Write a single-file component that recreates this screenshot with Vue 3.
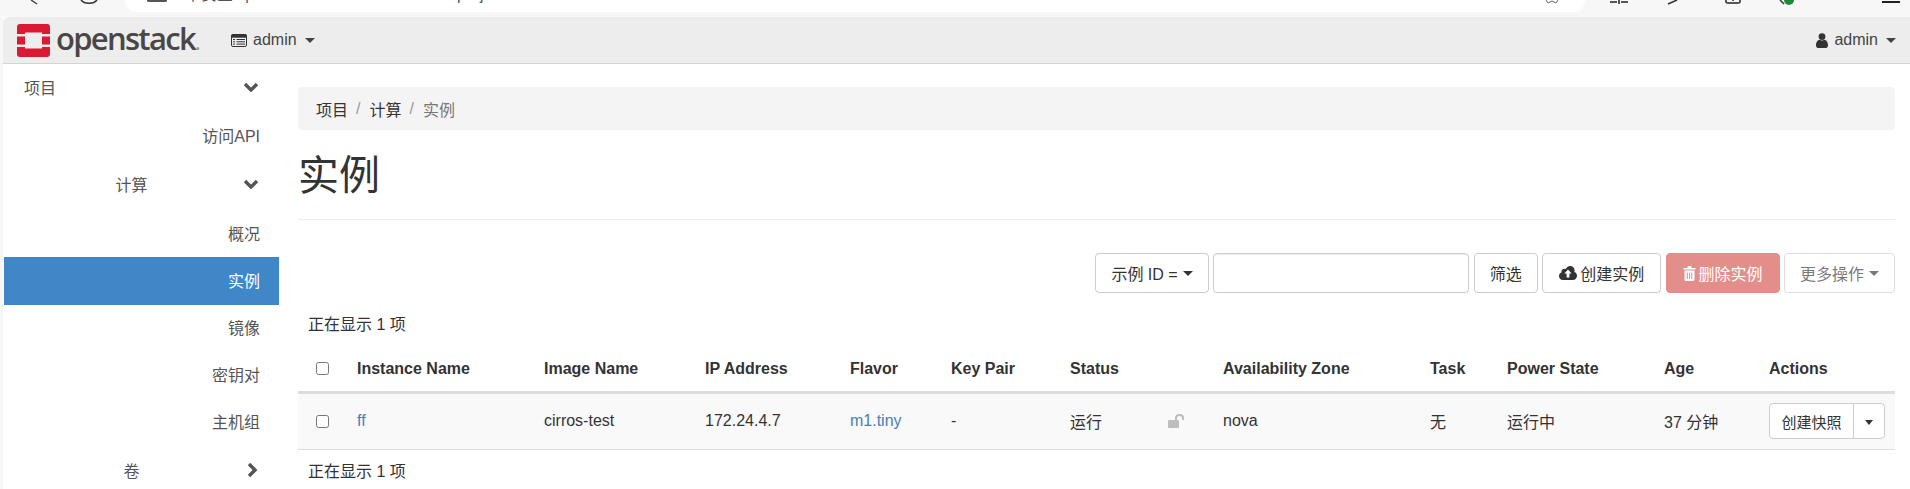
<template>
  <div class="page">
    <div class="browser">
      <svg class="browser-icons" width="1910" height="17" viewBox="0 0 1910 17">
        <path d="M31 0 L37 4" fill="none" stroke="#444" stroke-width="1.5" />
        <path d="M81 0 A9 6 0 0 0 97 0" fill="none" stroke="#333" stroke-width="1.5" />
        <path d="M147 0 V1 Q147 2 149 2 H165 Q167 2 167 1 V0 Z" fill="#555" />
        <path d="M1546 0 L1548 3 L1552 1 L1556 3 L1558 0" fill="none" stroke="#666" />
        <path d="M1610 2 H1617 M1621 2 H1628 M1619 0 V4" fill="none" stroke="#222" stroke-width="1.5" />
        <path d="M1677 0 L1668 4" fill="none" stroke="#333" stroke-width="1.5" />
        <path d="M1726 0 V2 Q1726 3 1728 3 H1738 Q1740 3 1740 2 V0 M1733 0 V1" fill="none" stroke="#222" stroke-width="1.5" />
        <path d="M1780 0 L1784 4" fill="none" stroke="#333" stroke-width="1.5" />
        <circle cx="1789" cy="0" r="5" fill="#1e8a35" />
        <path d="M1882 2 H1900" stroke="#222" stroke-width="2" />
      </svg>
      <div class="addressbar">
        <span class="addr-text">不安全</span>
        <span class="addr-sep">|</span>
        <span class="addr-text">192.168.10.100/dashboard/project/instances/</span>
      </div>
    </div>

    <div class="window">
      <header class="navbar">
        <div class="brand">
          <svg width="33" height="33" viewBox="0 0 33 33">
            <path d="M3 0 H30 Q33 0 33 3 V10 H25 V8.5 H8 V10 H0 V3 Q0 0 3 0 Z" fill="#da1a32" />
            <rect x="0" y="12.5" width="8" height="8" fill="#da1a32" />
            <rect x="25" y="12.5" width="8" height="8" fill="#da1a32" />
            <path d="M0 23 H8 V24.5 H25 V23 H33 V30 Q33 33 30 33 H3 Q0 33 0 30 Z" fill="#da1a32" />
          </svg>
          <span class="brand-name">openstack<span class="brand-dot">.</span></span>
        </div>
        <div class="nav-menu project-menu">
          <svg width="16" height="13" viewBox="0 0 16 13">
            <rect x="0.5" y="0.5" width="15" height="12" rx="1.5" fill="#eee" stroke="#333" />
            <rect x="0.5" y="0.5" width="15" height="3.2" fill="#333" />
            <path d="M2 5.5 H4 M5.5 5.5 H14 M2 7.8 H4 M5.5 7.8 H14 M2 10.1 H4 M5.5 10.1 H14" stroke="#333" stroke-width="1" />
          </svg>
          <span>admin</span>
          <i class="caret"></i>
        </div>
        <div class="nav-menu user-menu">
          <svg width="12" height="15" viewBox="0 0 12 15">
            <circle cx="6" cy="3.6" r="3.4" fill="#333" />
            <path d="M0 12.5 C0 8.5 2 7 3.6 6.8 C5 7.8 7 7.8 8.4 6.8 C10 7 12 8.5 12 12.5 C12 14 11 15 10 15 H2 C1 15 0 14 0 12.5 Z" fill="#333" />
          </svg>
          <span>admin</span>
          <i class="caret"></i>
        </div>
      </header>

      <div class="layout">
        <aside class="sidebar">
          <div class="nav-row top-row">
            <span>项目</span>
            <svg class="chev" width="16" height="10" viewBox="0 0 16 10"><path d="M2 2 L8 8 L14 2" /></svg>
          </div>
          <div class="nav-row leaf access">访问API</div>
          <div class="nav-row group">
            <span class="group-label">计算</span>
            <svg class="chev" width="16" height="10" viewBox="0 0 16 10"><path d="M2 2 L8 8 L14 2" /></svg>
          </div>
          <div v-for="item in computeItems" :key="item.name" class="nav-row leaf" :class="{ active: item.active }">
            {{ item.name }}
          </div>
          <div class="nav-row group">
            <span class="group-label">卷</span>
            <svg class="chev" width="16" height="16" viewBox="0 0 16 16"><path d="M6 2 L12 8 L6 14" /></svg>
          </div>
        </aside>

        <main class="content">
          <div class="breadcrumb">
            <span>项目</span><em>/</em>
            <span>计算</span><em>/</em>
            <span class="current">实例</span>
          </div>
          <h1 class="title">实例</h1>

          <div class="toolbar">
            <button class="btn filter-field">示例 ID = <i class="caret"></i></button>
            <input class="search" type="text" />
            <button class="btn filter-go">筛选</button>
            <button class="btn create">
              <svg width="18" height="14" viewBox="0 0 18 14">
                <path d="M4 14 C1.5 14 0 12.2 0 10 C0 8.3 1 7 2.4 6.5 C2.4 6.3 2.4 6.1 2.4 5.9 C2.4 4 3.9 2.8 5.5 2.8 C6 2.8 6.5 2.9 6.9 3.1 C7.7 1.3 9.3 0 11.2 0 C13.7 0 15.6 2 15.6 4.6 C15.6 5.2 15.5 5.7 15.4 6.1 C16.9 6.6 18 8 18 9.8 C18 12.2 16.2 14 14 14 Z" fill="#333" />
                <path d="M9 3.6 L12.6 7.4 H10.4 V11.4 H7.6 V7.4 H5.4 Z" fill="#fff" />
              </svg>
              创建实例
            </button>
            <button class="btn danger">
              <svg width="13" height="15" viewBox="0 0 13 15">
                <path d="M4.5 2 V1 Q4.5 0 5.5 0 H7.5 Q8.5 0 8.5 1 V2 H12.5 V3.6 H0.5 V2 Z M1.5 4.5 H11.5 V13.5 Q11.5 15 10 15 H3 Q1.5 15 1.5 13.5 Z" fill="#fff" />
                <path d="M4.3 6.5 V13 M6.5 6.5 V13 M8.7 6.5 V13" stroke="#e48e8b" />
              </svg>
              删除实例
            </button>
            <button class="btn disabled">更多操作 <i class="caret"></i></button>
          </div>

          <div class="count">正在显示 1 项</div>

          <table class="instances">
            <colgroup>
              <col v-for="w in colWidths" :key="w.key" :style="{ width: w.px + 'px' }" />
            </colgroup>
            <thead>
              <tr>
                <th class="check"><input type="checkbox" /></th>
                <th v-for="h in headers" :key="h">{{ h }}</th>
              </tr>
            </thead>
            <tbody>
              <tr>
                <td class="check"><input type="checkbox" /></td>
                <td><a>ff</a></td>
                <td>cirros-test</td>
                <td>172.24.4.7</td>
                <td><a>m1.tiny</a></td>
                <td>-</td>
                <td>
                  <div class="status">
                    <span>运行</span>
                    <svg width="17" height="14" viewBox="0 0 17 14">
                      <rect x="0" y="6" width="11" height="8" rx="1" fill="#bdbdbd" />
                      <path d="M8 6 V4 C8 2 9.6 1 11.5 1 C13.4 1 15 2 15 4 V6" fill="none" stroke="#bdbdbd" stroke-width="2" />
                    </svg>
                  </div>
                </td>
                <td>nova</td>
                <td>无</td>
                <td>运行中</td>
                <td>37 分钟</td>
                <td>
                  <div class="split">
                    <button class="split-main">创建快照</button>
                    <button class="split-caret"><i class="caret small"></i></button>
                  </div>
                </td>
              </tr>
            </tbody>
          </table>

          <div class="count bottom">正在显示 1 项</div>
        </main>
      </div>
    </div>
  </div>
</template>

<script setup>
const computeItems = [
  { name: '概况' },
  { name: '实例', active: true },
  { name: '镜像' },
  { name: '密钥对' },
  { name: '主机组' }
]

const headers = [
  'Instance Name',
  'Image Name',
  'IP Address',
  'Flavor',
  'Key Pair',
  'Status',
  'Availability Zone',
  'Task',
  'Power State',
  'Age',
  'Actions'
]

const colWidths = [49, 187, 161, 145, 101, 119, 153, 207, 77, 157, 105, 136].map((px, key) => ({ px, key }))
</script>

<style>
html,
body {
  margin: 0;
  background: #fff;
}
</style>

<style scoped>
.page {
  width: 1910px;
  height: 489px;
  overflow: hidden;
  position: relative;
  background: #f7f7f7;
  font-family: "Liberation Sans", "Noto Sans CJK SC", sans-serif;
  font-size: 16px;
  color: #333;
}

.browser {
  height: 17px;
  position: relative;
  overflow: hidden;
}

.browser-icons {
  position: absolute;
  left: 0;
  top: 0;
}

.addressbar {
  margin-left: 125px;
  width: 1460px;
  height: 12px;
  background: #fff;
  border-radius: 0 0 14px 14px;
  box-sizing: border-box;
  padding-left: 60px;
  display: flex;
  gap: 12px;
  overflow: hidden;
  color: #555;
  line-height: 16px;
}

.addr-text,
.addr-sep {
  margin-top: -13px;
  white-space: nowrap;
}

.window {
  margin-left: 3px;
  background: #fff;
  height: 472px;
}

.navbar {
  height: 46px;
  background: #ededed;
  border-bottom: 1px solid #d4d4d4;
  border-top-left-radius: 6px;
  display: flex;
  align-items: center;
  padding-left: 14px;
  padding-right: 14px;
}

.brand {
  display: flex;
  align-items: center;
  gap: 6px;
  width: 214px;
}

.brand-name {
  font-family: "Open Sans", sans-serif;
  font-size: 31px;
  font-weight: 600;
  letter-spacing: -1.7px;
  color: #4a4646;
  line-height: 36px;
}

.brand-dot {
  color: #999;
  font-size: 20px;
}

.nav-menu {
  display: flex;
  align-items: center;
  gap: 6px;
  color: #444;
}

.user-menu {
  margin-left: auto;
}

.caret {
  display: inline-block;
  width: 0;
  height: 0;
  margin-left: 2px;
  border-top: 5px solid currentColor;
  border-left: 5px solid transparent;
  border-right: 5px solid transparent;
  vertical-align: middle;
}

.caret.small {
  margin-left: 0;
  border-top-width: 5px;
  border-left-width: 4px;
  border-right-width: 4px;
}

.layout {
  display: flex;
}

.sidebar {
  width: 275px;
  flex-shrink: 0;
  margin-left: 1px;
  color: #555;
}

.nav-row {
  height: 47px;
  display: flex;
  align-items: center;
  box-sizing: border-box;
  padding-right: 19px;
  padding-bottom: 2px;
}

.top-row {
  height: 48px;
  padding-left: 20px;
  justify-content: space-between;
}

.access {
  height: 48px;
}

.leaf {
  justify-content: flex-end;
}

.group {
  height: 50px;
  padding-left: 16px;
}

.active + .leaf {
  height: 46px;
}

.active ~ .group {
  height: 51px;
}

.group-label {
  flex: 1;
  text-align: center;
}

.chev {
  fill: none;
  stroke: #555;
  stroke-width: 3.4;
  margin-right: 1px;
}

.active {
  height: 48px;
  background: #3f87c7;
  color: #fff;
}

.content {
  flex: 1;
  min-width: 0;
  padding: 23px 15px 0 19px;
}

.breadcrumb {
  height: 43px;
  background: #f4f4f4;
  border-radius: 4px;
  display: flex;
  align-items: center;
  padding-left: 18px;
  box-sizing: border-box;
}

.breadcrumb em {
  font-style: normal;
  color: #999;
  margin: 0 9px 0 8px;
}

.breadcrumb .current {
  color: #777;
}

.title {
  margin: 0;
  height: 90px;
  line-height: 92px;
  font-size: 41px;
  font-weight: 400;
  border-bottom: 1px solid #eee;
  box-sizing: border-box;
  color: #333;
}

.toolbar {
  margin-top: 33px;
  display: flex;
  justify-content: flex-end;
  gap: 4.4px;
}

.btn {
  height: 40px;
  padding: 0;
  font: inherit;
  color: #333;
  background: #fff;
  border: 1px solid #ccc;
  border-radius: 4px;
  display: inline-flex;
  align-items: center;
  justify-content: center;
  gap: 3px;
  box-sizing: border-box;
  white-space: nowrap;
  width: 111px;
}

.filter-field {
  width: 114px;
}

.filter-go {
  width: 64px;
}

.create {
  width: 119px;
}

.search {
  width: 256px;
  height: 40px;
  box-sizing: border-box;
  border: 1px solid #ccc;
  border-radius: 4px;
  box-shadow: inset 0 1px 1px rgba(0, 0, 0, 0.075);
}

.danger {
  width: 114px;
  background: #e48e8b;
  border-color: #e48e8b;
  color: #fff;
}

.disabled {
  opacity: 0.65;
}

.count {
  margin-top: 22px;
  padding-left: 10px;
  line-height: 20px;
  height: 20px;
}

.bottom {
  margin-top: 12px;
}

.instances {
  width: 100%;
  margin-top: 11px;
  table-layout: fixed;
  border-collapse: collapse;
}

.instances th,
.instances td {
  padding: 0 10px;
  text-align: left;
}

.instances th {
  height: 46px;
  padding-top: 2px;
  box-sizing: border-box;
  font-weight: 700;
  border-bottom: 3px solid #ddd;
}

.instances td {
  height: 55px;
  background: #f9f9f9;
  border-bottom: 1px solid #ddd;
}

.instances .check {
  padding: 0 0 0 18px;
}

.check input {
  display: block;
  margin: 0;
  width: 13px;
  height: 13px;
}

.instances a {
  color: #4a7fb5;
}

.status {
  display: flex;
  align-items: center;
  justify-content: space-between;
  padding-right: 18px;
}

.split {
  display: flex;
  width: 116px;
  height: 36px;
  background: #fff;
  border: 1px solid #ccc;
  border-radius: 4px;
  box-sizing: border-box;
}

.split button {
  font: inherit;
  font-size: 15px;
  color: #333;
  background: none;
  border: 0;
  padding: 0;
}

.split-main {
  flex: 1;
  border-right: 1px solid #ccc !important;
}

.split-caret {
  width: 30px;
}
</style>
